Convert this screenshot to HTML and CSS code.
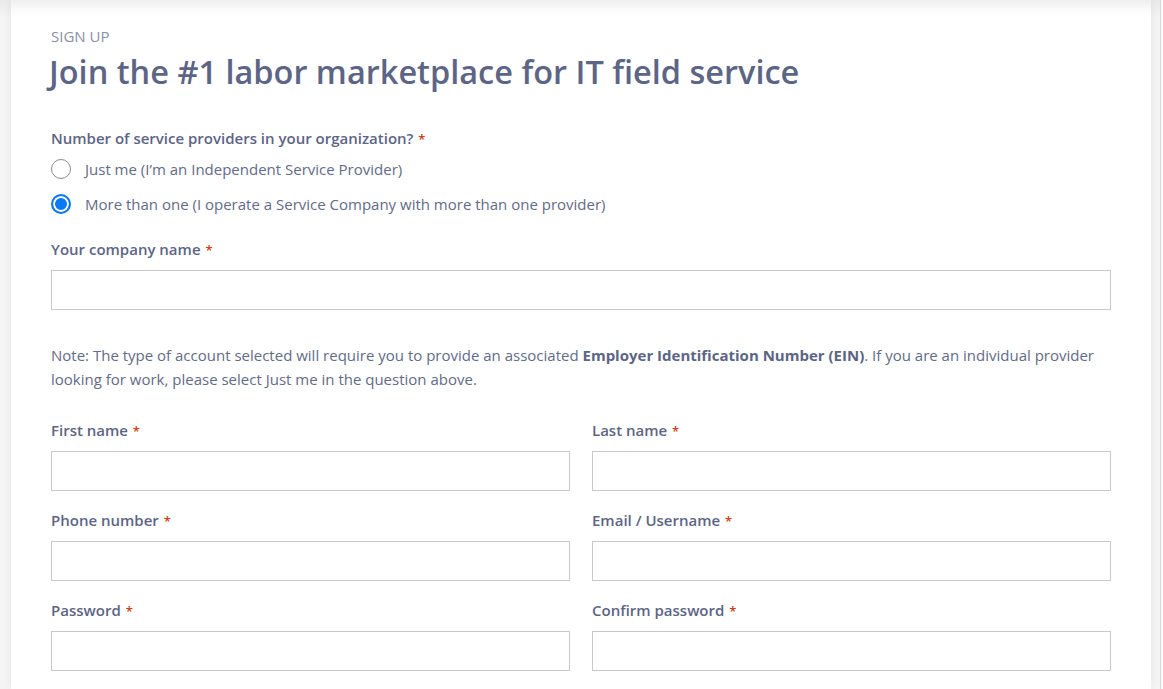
FILE: index.html
```html
<!DOCTYPE html>
<html>
<head>
    <title>Sign Up</title>
    <meta name="viewport" content="width=device-width, initial-scale=1">
    <link rel="stylesheet" href="styles.css">
</head>
<body>
    <div class="page">
        <div class="card">
            <div class="eyebrow">SIGN UP</div>
            <h1>Join the #1 labor marketplace for IT field service</h1>

            <div class="question">
                <label class="label">Number of service providers in your organization? <span class="req">*</span></label>
                <div class="radios">
                    <label class="radio-row"><input type="radio" name="size"> Just me (I’m an Independent Service Provider)</label>
                    <label class="radio-row"><input type="radio" name="size" checked> More than one (I operate a Service Company with more than one provider)</label>
                </div>
            </div>

            <div class="field company">
                <label class="label">Your company name <span class="req">*</span></label>
                <input type="text">
            </div>

            <p class="note">Note: The type of account selected will require you to provide an associated <strong>Employer Identification Number (EIN)</strong>. If you are an individual provider looking for work, please select Just me in the question above.</p>

            <div class="form-grid">
                <div class="field">
                    <label class="label">First name <span class="req">*</span></label>
                    <input type="text">
                </div>
                <div class="field">
                    <label class="label">Last name <span class="req">*</span></label>
                    <input type="text">
                </div>
                <div class="field">
                    <label class="label">Phone number <span class="req">*</span></label>
                    <input type="text">
                </div>
                <div class="field">
                    <label class="label">Email / Username <span class="req">*</span></label>
                    <input type="text">
                </div>
                <div class="field">
                    <label class="label">Password <span class="req">*</span></label>
                    <input type="password">
                </div>
                <div class="field">
                    <label class="label">Confirm password <span class="req">*</span></label>
                    <input type="password">
                </div>
            </div>
        </div>
    </div>
    <div class="scroll-edge"></div>
</body>
</html>
```

FILE: styles.css
```css
html, body { height: 100%; }
body { margin: 0; display: flex; font-family: "Open Sans", "Liberation Sans", sans-serif; color: #636b87; background: #f9f9f9; overflow: hidden; }
.page { flex: 1; padding: 0 9px 0 11px; background: linear-gradient(to bottom, #e9e9e9, #f4f4f4 18px); }
.card { width: 1140px; box-sizing: border-box; height: 100%; padding: 26px 40px 0; background: linear-gradient(to bottom, #efefef, #fbfbfb 10px, #fff 18px); box-shadow: 0 0 8px rgba(0,0,0,0.06); }
.scroll-edge { width: 2px; border-left: 1px solid #dadada; background: #fafafa; }

.eyebrow { font-size: 15px; line-height: 20px; color: #8a90a6; }
h1 { margin: 6px 0 0 -2px; font-size: 32.5px; line-height: 40px; font-weight: 600; color: #5c6585; }

.label { display: block; height: 20px; font-size: 15px; line-height: 20px; font-weight: 600; color: #5c6585; }
.req { color: #cf3f18; font-size: 13px; line-height: 1; margin-left: 1px; }

.question { margin-top: 36px; }
.radios { display: flex; flex-direction: column; gap: 11px; margin-top: 9px; }
.radio-row { display: flex; align-items: center; height: 24px; font-size: 15px; color: #636b87; }
.radio-row input { appearance: none; -webkit-appearance: none; width: 20px; height: 20px; margin: 0 14px 0 0; border: 1px solid #8a8a8a; border-radius: 50%; background: #fff; box-sizing: border-box; }
.radio-row input:checked { border: 2px solid #0b78f5; background: #0b78f5; box-shadow: inset 0 0 0 2px #fff; }

.field input { display: block; width: 100%; height: 40px; box-sizing: border-box; margin-top: 11px; border: 1px solid #c9c9c9; background: #fff; font: inherit; }
.company { margin-top: 23px; }

.note { margin: 33px 0 0; font-size: 15px; line-height: 24px; color: #636b87; }
.note strong { font-weight: 700; color: #5c6585; }

.form-grid { display: grid; grid-template-columns: 1fr 1fr; column-gap: 22px; row-gap: 19px; margin-top: 29px; }
```
